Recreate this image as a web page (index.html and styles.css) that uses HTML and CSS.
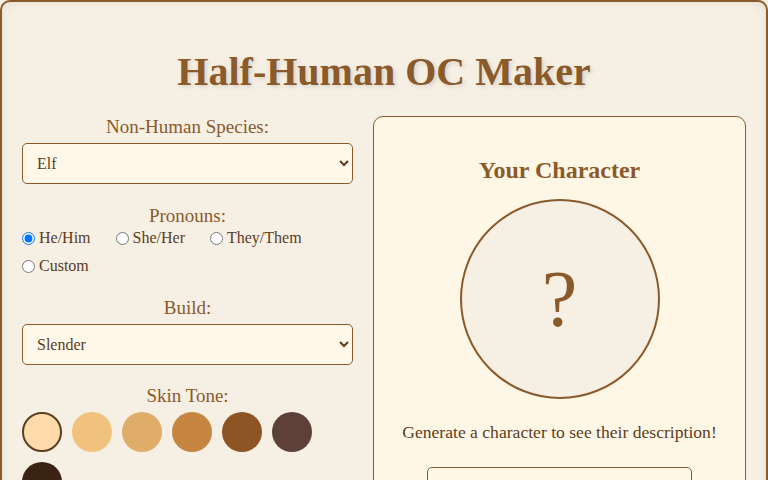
FILE: index.html
```html
<!DOCTYPE html>
<html lang="en">
<head>
<meta charset="utf-8">
<title>Half-Human OC Maker</title>
<link rel="stylesheet" href="styles.css">
</head>
<body>
<div class="app">
  <h1 class="title">Half-Human OC Maker</h1>
  <div class="columns">
    <div class="controls">
      <div class="group group-species">
        <label class="label" for="species">Non-Human Species:</label>
        <select id="species" class="select">
          <option>Elf</option>
          <option>Vampire</option>
          <option>Werewolf</option>
        </select>
      </div>
      <div class="group group-pronouns">
        <div class="label">Pronouns:</div>
        <div class="radios">
          <label class="radio"><input type="radio" name="p" checked>He/Him</label>
          <label class="radio"><input type="radio" name="p">She/Her</label>
          <label class="radio"><input type="radio" name="p">They/Them</label>
          <label class="radio"><input type="radio" name="p">Custom</label>
        </div>
      </div>
      <div class="group">
        <label class="label" for="build">Build:</label>
        <select id="build" class="select">
          <option>Slender</option>
          <option>Athletic</option>
          <option>Stocky</option>
        </select>
      </div>
      <div class="group">
        <div class="label">Skin Tone:</div>
        <div class="swatches">
          <span class="swatch selected" style="background:#ffdbac"></span>
          <span class="swatch" style="background:#f1c27d"></span>
          <span class="swatch" style="background:#e0ac69"></span>
          <span class="swatch" style="background:#c68642"></span>
          <span class="swatch" style="background:#8d5524"></span>
          <span class="swatch" style="background:#5d4037"></span>
          <span class="swatch" style="background:#3b2314"></span>
        </div>
      </div>
    </div>
    <div class="preview">
      <h2 class="preview-title">Your Character</h2>
      <div class="avatar">?</div>
      <p class="desc">Generate a character to see their description!</p>
      <div class="details"></div>
    </div>
  </div>
</div>
</body>
</html>
```
FILE: styles.css
```css
html, body {
  margin: 0;
  padding: 0;
  background: #f5efe4;
}
body {
  font-family: "Liberation Serif", "Times New Roman", serif;
  color: #5c3d1e;
}
.app {
  border: 2px solid #8b5a2b;
  border-radius: 10px;
  background: #f5efe4;
  padding: 20px;
  min-height: 600px;
  box-shadow: inset 0 0 10px rgba(139, 90, 43, 0.12);
}
.title {
  font-size: 40px;
  font-weight: bold;
  color: #8b5a2b;
  text-align: center;
  margin: 27px 0 21px;
  line-height: 46px;
  text-shadow: 2px 2px 4px rgba(0, 0, 0, 0.12);
}
.columns {
  display: flex;
  gap: 20px;
  align-items: flex-start;
}
.controls {
  width: 331px;
  flex: none;
}
.group {
  margin-bottom: 20px;
}
.group-species {
  margin-bottom: 21px;
}
.group-pronouns {
  margin-bottom: 22px;
}
.label {
  display: block;
  text-align: center;
  font-size: 19px;
  line-height: 22px;
  color: #8b5a2b;
  margin-bottom: 5px;
}
.select {
  display: block;
  width: 100%;
  height: 41px;
  padding: 0 10px;
  font-family: "Liberation Serif", "Times New Roman", serif;
  font-size: 16px;
  color: #5c3d1e;
  background: #fff8e8;
  border: 1px solid #8b5a2b;
  border-radius: 5px;
}
.radios {
  display: flex;
  flex-wrap: wrap;
  row-gap: 10px;
  column-gap: 25px;
  margin-top: -3px;
}
.radio {
  display: flex;
  align-items: center;
  font-size: 16px;
  line-height: 18px;
  color: #5c3d1e;
}
.radio input {
  margin: 0 4px 0 0;
  width: 13px;
  height: 13px;
}
.swatches {
  display: flex;
  flex-wrap: wrap;
  gap: 10px;
}
.swatch {
  width: 40px;
  height: 40px;
  border-radius: 50%;
  box-sizing: border-box;
}
.swatch.selected {
  border: 2px solid #5c3d1e;
}
.preview {
  flex: 1;
  background: #fff7e6;
  border: 1px solid #8b5a2b;
  border-radius: 10px;
  padding: 39px 20px 20px;
  display: flex;
  flex-direction: column;
  align-items: center;
}
.preview-title {
  font-size: 24px;
  line-height: 28px;
  font-weight: bold;
  color: #8b5a2b;
  margin: 0 0 15px;
}
.avatar {
  width: 200px;
  height: 200px;
  box-sizing: border-box;
  border: 2px solid #8b5a2b;
  border-radius: 50%;
  background: #f5efe4;
  display: flex;
  align-items: center;
  justify-content: center;
  font-size: 80px;
  color: #8b5a2b;
}
.desc {
  font-size: 17.6px;
  line-height: 21px;
  color: #5c3d1e;
  margin: 23px 0 24px;
  text-align: center;
}
.details {
  width: 265px;
  height: 80px;
  box-sizing: border-box;
  border: 1px solid #7a5a3a;
  border-radius: 5px;
}
```
